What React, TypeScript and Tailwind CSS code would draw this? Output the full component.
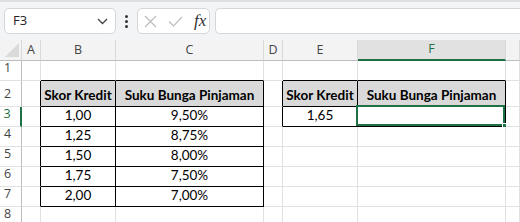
import React from "react";

type Cell = {
  text?: string;
  bold?: boolean;
  fill?: boolean;
  rB?: boolean;
  bB?: boolean;
  selected?: boolean;
};

const cols = ["A", "B", "C", "D", "E", "F", ""];
const rowHeights = ["h-[20px]", "h-[26px]", "h-[20px]", "h-[20px]", "h-[20px]", "h-[20px]", "h-[20px]", "h-[20px]"];

function buildRow(r: number): Cell[] {
  const bc = [
    ["1,00", "9,50%"],
    ["1,25", "8,75%"],
    ["1,50", "8,00%"],
    ["1,75", "7,50%"],
    ["2,00", "7,00%"],
  ];
  const row: Cell[] = [{}, {}, {}, {}, {}, {}, {}];
  if (r === 1) {
    row[1].bB = true;
    row[2].bB = true;
    row[4].bB = true;
    row[5].bB = true;
  }
  if (r >= 2 && r <= 7) {
    row[0].rB = true;
    row[1].rB = true;
    row[1].bB = true;
    row[2].rB = true;
    row[2].bB = true;
  }
  if (r === 2) {
    row[1] = { ...row[1], text: "Skor Kredit", bold: true, fill: true };
    row[2] = { ...row[2], text: "Suku Bunga Pinjaman", bold: true, fill: true };
    row[4] = { text: "Skor Kredit", bold: true, fill: true, rB: true, bB: true };
    row[5] = { text: "Suku Bunga Pinjaman", bold: true, fill: true, rB: true, bB: true };
    row[3].rB = true;
  }
  if (r >= 3 && r <= 7) {
    row[1].text = bc[r - 3][0];
    row[2].text = bc[r - 3][1];
  }
  if (r === 3) {
    row[3].rB = true;
    row[4] = { text: "1,65", rB: true, bB: true };
    row[5] = { rB: true, bB: true, selected: true };
  }
  return row;
}

export default function App() {
  return (
    <div className="w-[520px] h-[222px] overflow-hidden bg-white relative">
      <div className="h-[40px] bg-[#f3f4f6] border-t-[2px] border-[#dcdfe2] flex items-start pt-[6px] pl-[4px]">
        <div className="w-[112px] h-[26px] bg-white border border-[#d4d6d9] rounded-[5px] flex items-center pl-[8px] pr-[7px] justify-between">
          <span className="text-[13px] text-[#222] font-['Open_Sans',sans-serif]">F3</span>
          <svg width="11" height="7" viewBox="0 0 11 7" fill="none">
            <path d="M1 1l4.5 4.5L10 1" stroke="#444" strokeWidth="1.3" />
          </svg>
        </div>
        <div className="w-[21px] h-[26px] flex flex-col items-center justify-center gap-[2px]">
          <div className="w-[3px] h-[3px] bg-[#333] rounded-full" />
          <div className="w-[3px] h-[3px] bg-[#333] rounded-full" />
          <div className="w-[3px] h-[3px] bg-[#333] rounded-full" />
        </div>
        <div className="w-[73px] h-[26px] bg-white border border-[#d4d6d9] rounded-[5px] flex items-center pl-[6px] gap-[11px]">
          <svg width="13" height="13" viewBox="0 0 13 13" fill="none">
            <path d="M1 1l11 11M12 1L1 12" stroke="#bdbdbd" strokeWidth="1.2" />
          </svg>
          <svg width="15" height="11" viewBox="0 0 15 11" fill="none">
            <path d="M1 5.5l4.5 4.5L14 1" stroke="#bdbdbd" strokeWidth="1.2" />
          </svg>
          <span className="text-[17px] italic text-[#333] font-['Liberation_Serif',serif] leading-none -mt-[2px]">
            fx
          </span>
        </div>
        <div className="ml-[5px] flex-1 h-[26px] bg-white border border-[#d4d6d9] border-r-0 rounded-l-[5px]" />
      </div>

      <div className="grid grid-cols-[22px_19px_75px_148px_19px_75px_148px_1fr]">
        <div className="h-[21px] bg-[#f3f3f3] border-r border-b border-r-[#d8d8d8] border-b-[#bdbdbd] relative">
          <svg className="absolute left-[5px] top-[3px]" width="14" height="14" viewBox="0 0 14 14">
            <path d="M14 0V14H0Z" fill="#dadada" />
          </svg>
        </div>
        {cols.map((c, i) => (
          <div
            key={c + i}
            className={
              "h-[21px] flex items-center justify-center text-[12.5px] font-['Open_Sans',sans-serif] border-r border-r-[#d8d8d8] " +
              (c === "F"
                ? "bg-[#e1e1e1] text-[#1e7145] border-b-[2px] border-b-[#1e7145]"
                : "bg-[#f3f3f3] text-[#444] border-b border-b-[#bdbdbd]")
            }
          >
            {c}
          </div>
        ))}
        {[1, 2, 3, 4, 5, 6, 7, 8].map((r) => {
          const row = buildRow(r);
          const h = rowHeights[r - 1];
          return (
            <React.Fragment key={r}>
              <div
                className={
                  h +
                  " bg-white flex items-end justify-center pr-[6px] pb-[2px] text-[12.5px] font-['Open_Sans',sans-serif] border-b border-b-[#e1e1e1] " +
                  (r === 3
                    ? "text-[#1e7145] border-r-[2px] border-r-[#1e7145]"
                    : "text-[#444] border-r border-r-[#bdbdbd]")
                }
              >
                {r}
              </div>
              {row.map((cell, i) => (
                <div
                  key={i}
                  className={
                    h +
                    " relative flex items-end justify-center pb-[2px] text-[13.5px] leading-[17px] text-black font-['Lato',sans-serif] whitespace-nowrap border-r border-b " +
                    (cell.rB ? "border-r-black " : "border-r-[#e1e1e1] ") +
                    (cell.bB ? "border-b-black " : "border-b-[#e1e1e1] ") +
                    (cell.fill ? "bg-[#d9d9d9] " : "bg-white ") +
                    (cell.bold ? "font-bold " : "")
                  }
                >
                  {cell.text}
                  {cell.selected && (
                    <>
                      <div className="absolute top-[-2px] left-[-2px] right-0 bottom-0 border-2 border-[#1e7145] pointer-events-none" />
                      <div className="absolute right-[-4px] bottom-[-4px] w-[7px] h-[7px] bg-[#1e7145] border border-white" />
                    </>
                  )}
                </div>
              ))}
            </React.Fragment>
          );
        })}
      </div>
    </div>
  );
}
